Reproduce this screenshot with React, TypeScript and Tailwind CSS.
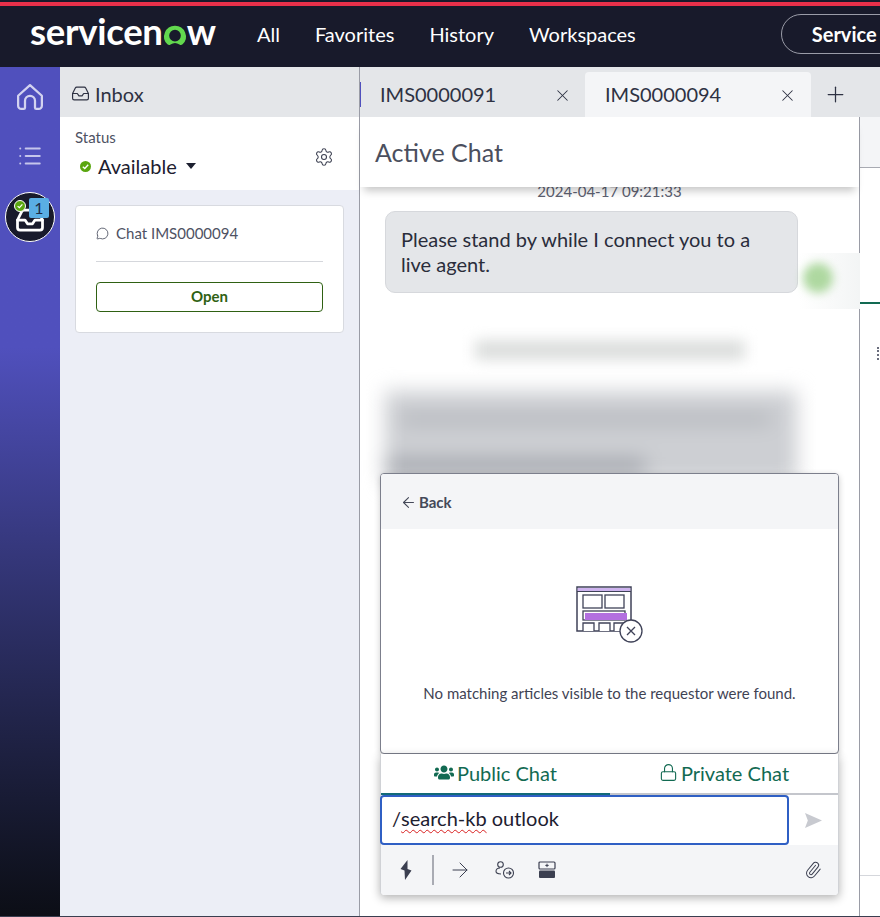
import { Inbox, List, Lock, MessageCircle, Paperclip, Plus, Settings, X, ArrowLeft, ArrowRight } from "lucide-react"
import { FaUsers } from "react-icons/fa"

const navItems = ["All", "Favorites", "History", "Workspaces"]

function LogoRing() {
  return (
    <svg viewBox="0 0 24 24" className="-mx-[1px] mt-[5px] h-[26px] w-[26px]">
      <path
        d="M12 2.500a10 10 0 0 0-7 17.200c.8.800 2 .900 2.900.200a7.200 7.200 0 0 1 8.200 0c.9.700 2.100.600 2.900-.200A10 10 0 0 0 12 2.500zm0 14.500a5.400 5.400 0 1 1 0-10.800 5.400 5.400 0 0 1 0 10.800z"
        fill="#62d84e"
      />
    </svg>
  )
}

function HomeIcon() {
  return (
    <svg viewBox="0 0 24 24" className="h-[30px] w-[30px]" fill="none" stroke="#d3d3f0" strokeWidth="1.800" strokeLinejoin="round">
      <path d="M2.500 11 12 2.500 21.500 11v8a2.500 2.500 0 0 1-2.500 2.500h-2a1 1 0 0 1-1-1V15a4 4 0 0 0-8 0v5.500a1 1 0 0 1-1 1H5A2.500 2.500 0 0 1 2.500 19z" />
    </svg>
  )
}

function EmptyIllustration() {
  return (
    <svg viewBox="0 0 68 60" className="h-[60px] w-[68px]">
      <rect x="1" y="1" width="54" height="44" fill="#fff" stroke="#3f4258" strokeWidth="1.500" />
      <rect x="1.700" y="2" width="52.600" height="3" fill="#cdb3ee" />
      <line x1="1" y1="5.500" x2="55" y2="5.500" stroke="#3f4258" strokeWidth="1" />
      <rect x="7" y="9" width="19" height="13" fill="#fff" stroke="#3f4258" strokeWidth="1.300" />
      <rect x="29" y="9" width="19" height="13" fill="#fff" stroke="#3f4258" strokeWidth="1.300" />
      <rect x="7" y="25" width="42" height="9" fill="#fff" stroke="#3f4258" strokeWidth="1.300" />
      <rect x="9" y="27" width="42" height="7" fill="#b36fe0" />
      <path d="M7 45v-8h11v8M23 45v-8h11v8M38 45v-8h11v8" fill="#fff" stroke="#3f4258" strokeWidth="1.300" />
      <circle cx="55" cy="45" r="11" fill="#fff" stroke="#3f4258" strokeWidth="1.300" />
      <path d="M51 41l8 8M59 41l-8 8" stroke="#3f4258" strokeWidth="1.300" />
    </svg>
  )
}

function BoltIcon() {
  return (
    <svg viewBox="0 0 14 20" className="h-[20px] w-[14px]">
      <path d="M8.500 0 1.500 9l4 1.500L6 20l6.500-9.500-4-1.500z" fill="#3b3f50" />
    </svg>
  )
}

function SendIcon() {
  return (
    <svg viewBox="0 0 20 18" className="h-[17px] w-[19px]">
      <path d="M1 1 19 9 1 17l3-8z" fill="#c8cad0" />
    </svg>
  )
}

function TransferIcon() {
  return (
    <svg viewBox="0 0 22 20" className="h-[20px] w-[22px]" fill="none" stroke="#3b3f50" strokeWidth="1.100">
      <circle cx="6.500" cy="4.500" r="2.800" />
      <path d="M6 8c-2.500 0-4 1.500-4 3.300S4 14 7 14" />
      <circle cx="14.500" cy="13" r="5" />
      <path d="M12 13h5M15 11l2 2-2 2" />
    </svg>
  )
}

function SplitIcon() {
  return (
    <svg viewBox="0 0 18 18" className="h-[18px] w-[18px]">
      <rect x="1" y="1" width="16" height="7" rx="1" fill="none" stroke="#3b3f50" strokeWidth="1.200" />
      <path d="M9 2.700v3.400M7.300 4.400h3.400" stroke="#3b3f50" strokeWidth="1" />
      <rect x="1" y="9.500" width="16" height="7.500" rx="1" fill="#3b3f50" />
    </svg>
  )
}

function InboxBadge() {
  return (
    <div className="relative flex h-[50px] w-[50px] items-center justify-center rounded-full border border-white bg-[#181a2b]">
      <Inbox className="mt-[6px] h-[30px] w-[30px] text-white" strokeWidth={2.200} />
      <span className="absolute right-[5px] top-[5px] flex h-[20px] w-[20px] items-center justify-center rounded-[2px] bg-[#5aaee4] text-[16px] text-[#1d2b45]">
        1
      </span>
      <span className="absolute left-[8px] top-[7px] flex h-[12px] w-[12px] items-center justify-center rounded-full border border-white bg-[#5aa60f]">
        <svg viewBox="0 0 10 10" className="h-[8px] w-[8px]">
          <path d="M2 5.200 4.200 7.200 8 3" fill="none" stroke="#fff" strokeWidth="1.500" />
        </svg>
      </span>
    </div>
  )
}

export default function App() {
  return (
    <div className="flex h-[917px] w-[880px] flex-col overflow-hidden bg-white font-['Lato',sans-serif] text-[#2e3243]">
      <header className="flex h-[67px] shrink-0 flex-col bg-[#181a2b]">
        <div className="mt-[2px] h-[4px] bg-[#e8304a]" />
        <div className="flex flex-1 items-center overflow-hidden pb-[6px] pl-[30px]">
          <div className="flex w-[227px] shrink-0 items-center text-[36.500px] font-bold leading-none tracking-[-0.3px] text-white">
            <span className="-mt-[5px]">servicen</span>
            <LogoRing />
            <span className="-mt-[5px]">w</span>
          </div>
          <nav className="flex gap-[35px] text-[20px] text-white">
            {navItems.map((item) => (
              <span key={item}>{item}</span>
            ))}
          </nav>
          <div className="ml-[145px] flex h-[40px] w-[200px] shrink-0 items-center rounded-[20px] border border-[#9a9ca8] pl-[30px] text-[20px] font-bold text-white">
            Service
          </div>
        </div>
      </header>

      <div className="flex min-h-0 flex-1">
        <aside className="flex w-[60px] shrink-0 flex-col items-center bg-gradient-to-b from-[#5050bd] from-[33%] to-[#0c0e16] to-100% pt-[15px]">
          <HomeIcon />
          <List className="mt-[31px] h-[26px] w-[26px] text-[#c6c6ec]" strokeWidth={1.800} />
          <div className="mt-[23px]">
            <InboxBadge />
          </div>
        </aside>

        <section className="flex w-[300px] shrink-0 flex-col border-r border-[#9a9ca6] bg-[#eceef6]">
          <div className="flex h-[50px] shrink-0 items-center gap-[5px] bg-[#e4e6e9] pl-[11px] pt-[3px] text-[20px]">
            <Inbox className="h-[19px] w-[19px]" strokeWidth={1.500} />
            <span>Inbox</span>
          </div>
          <div className="relative h-[73px] shrink-0 bg-white pl-[15px] pt-[10px]">
            <div className="text-[15px] leading-[20px] text-[#4e5263]">Status</div>
            <div className="mt-[5px] flex items-center pl-[5px] text-[20px] leading-[28px] text-[#1d2030]">
              <span className="mr-[7px] flex h-[11px] w-[11px] items-center justify-center rounded-full bg-[#5aa60f]">
                <svg viewBox="0 0 10 10" className="h-[9px] w-[9px]">
                  <path d="M2 5.200 4.200 7.200 8 3" fill="none" stroke="#fff" strokeWidth="1.500" />
                </svg>
              </span>
              Available
              <span className="ml-[9px] h-0 w-0 border-x-[5px] border-t-[6px] border-x-transparent border-t-[#1d2030]" />
            </div>
            <Settings className="absolute right-[25px] top-[30px] h-[20px] w-[20px] text-[#3d4152]" strokeWidth={1.300} />
          </div>
          <div className="mx-[15px] mt-[15px] h-[128px] rounded-[4px] border border-[#d8dae0] bg-white px-[20px]">
            <div className="flex h-[56px] items-center gap-[7px] border-b border-[#d5d7dc] text-[15px] text-[#4e5263]">
              <MessageCircle className="h-[13px] w-[13px]" strokeWidth={1.600} />
              Chat IMS0000094
            </div>
            <button className="mt-[20px] h-[30px] w-full rounded-[4px] border border-[#2f6113] pb-[1px] text-[15px] font-bold text-[#2f6113]">
              Open
            </button>
          </div>
        </section>

        <main className="flex min-w-0 flex-1 flex-col">
          <div className="flex h-[50px] shrink-0 items-end bg-[#e4e6e9] text-[20px] text-[#2e3243]">
            <div className="relative flex h-[45px] w-[225px] items-center justify-between pb-[1px] pl-[20px] pr-[13px]">
              <span className="absolute left-0 top-[10px] h-[25px] w-[1px] bg-[#5050bd]" />
              <span>IMS0000091</span>
              <X className="mt-[3px] h-[19px] w-[19px]" strokeWidth={1.300} />
            </div>
            <div className="flex h-[45px] w-[226px] items-center justify-between rounded-t-[4px] bg-[#f4f5f7] pb-[1px] pl-[20px] pr-[14px]">
              <span>IMS0000094</span>
              <X className="mt-[3px] h-[19px] w-[19px]" strokeWidth={1.300} />
            </div>
            <div className="flex h-[45px] w-[49px] items-center justify-center">
              <Plus className="h-[25px] w-[25px]" strokeWidth={1.200} />
            </div>
          </div>

          <div className="flex min-h-0 flex-1">
            <div className="relative z-[1] w-[499px] shrink-0">
              <div className="relative z-10 flex h-[70px] items-center bg-white pl-[15px] pt-[2px] text-[25px] text-[#4b4f5e] shadow-[0_8px_8px_-4px_rgba(0,0,0,0.22)]">
                Active Chat
              </div>
              <div className="-mt-[5px] text-center text-[15px] leading-[18px] text-[#5c6070]">2024-04-17 09:21:33</div>
              <div className="relative ml-[25px] mt-[11px] h-[82px] w-[413px] rounded-[10px] border border-[#d6d8dc] bg-[#e4e6e9] py-[15px] pl-[15px] pr-[40px] text-[20px] leading-[25px] text-[#2a2d3b]">
                Please stand by while I connect you to a live agent.
                <span className="absolute -right-[63px] top-[41px] h-[56px] w-[61px] bg-gradient-to-r from-white to-[#f3f5f5]">
                  <span className="absolute left-[4px] top-[10px] block h-[30px] w-[30px] rounded-full bg-[#aed8a0] blur-[5px]" />
                </span>
              </div>
              <div className="mx-auto mt-[47px] h-[20px] w-[270px] bg-[#dcdedd] blur-[7px]" />
              <div className="ml-[25px] mt-[31px] h-[92px] w-[412px] overflow-hidden bg-[#cdcfd3] blur-[10px]">
                <div className="ml-[16px] mt-[24px] h-[8px] w-[370px] bg-[#a9acb2]" />
                <div className="ml-[0px] mt-[36px] h-[16px] w-[260px] bg-[#a2a5ac]" />
              </div>

              <div className="absolute bottom-[21px] left-[20px] w-[459px]">
                <div className="flex h-[281px] flex-col overflow-hidden rounded-[4px] border border-[#7c7f8c] bg-white shadow-[0_2px_6px_rgba(0,0,0,0.2)]">
                  <div className="flex h-[55px] shrink-0 items-center gap-[2px] bg-[#f4f5f7] pl-[19px] pt-[2px] text-[15px] font-bold text-[#454959]">
                    <ArrowLeft className="h-[17px] w-[17px]" strokeWidth={1.500} />
                    Back
                  </div>
                  <div className="flex flex-1 flex-col items-center pt-[57px]">
                    <EmptyIllustration />
                    <p className="mt-[37px] text-[15px] leading-[20px] text-[#3f4354]">
                      No matching articles visible to the requestor were found.
                    </p>
                  </div>
                </div>

                <div className="flex flex-col rounded-b-[4px] border-x border-[#d0d2d6] bg-white shadow-[0_3px_10px_rgba(0,0,0,0.3)]">
                  <div className="flex h-[41px] text-[20px] text-[#126a52]">
                    <div className="flex w-[229px] items-center justify-center gap-[3px] border-b-[2px] border-[#126a78] pb-[2px]">
                      <FaUsers className="h-[19px] w-[20px]" />
                      Public Chat
                    </div>
                    <div className="flex flex-1 items-center justify-center gap-[3px] border-b-[2px] border-[#c4c6cc] pb-[2px]">
                      <Lock className="h-[19px] w-[19px]" strokeWidth={1.400} />
                      Private Chat
                    </div>
                  </div>
                  <div className="flex h-[50px] items-center">
                    <div className="-ml-[1px] flex h-full w-[409px] items-center rounded-[4px] border-2 border-[#2f5fc4] pb-[4px] pl-[10px] text-[20px] text-[#1d2030]">
                      /
                      <span className="underline decoration-[#d92020] decoration-wavy decoration-1 underline-offset-[3px]">search-kb</span>
                      &nbsp;outlook
                    </div>
                    <span className="ml-[15px]">
                      <SendIcon />
                    </span>
                  </div>
                  <div className="flex h-[50px] items-center rounded-b-[4px] bg-[#f4f5f7] pl-[18px] pr-[16px] text-[#3b3f50]">
                    <BoltIcon />
                    <span className="ml-[19px] h-[30px] w-[1.500px] bg-[#a9abb3]" />
                    <ArrowRight className="ml-[14px] h-[24px] w-[24px]" strokeWidth={1} />
                    <span className="ml-[22px]">
                      <TransferIcon />
                    </span>
                    <span className="ml-[22px]">
                      <SplitIcon />
                    </span>
                    <Paperclip className="ml-auto h-[18px] w-[18px] rotate-[-5deg]" strokeWidth={1.300} />
                  </div>
                </div>
              </div>
            </div>

            <aside className="flex flex-1 flex-col border-l border-[#9a9ca6]">
              <div className="h-[51px] border-b border-[#a8aab2] bg-[#f4f5f7]" />
              <div className="mt-[134px] h-[2px] bg-[#126a52]" />
              <div className="mt-[43px] flex justify-end pr-[1px]">
                <span className="h-[13px] w-[1px] border-l-2 border-dotted border-[#6a6d7c]" />
              </div>
              <div className="mb-[40px] mt-auto h-[1px] bg-[#d5d7dc]" />
            </aside>
          </div>
        </main>
      </div>
      <div className="h-[1px] shrink-0 bg-[#3a3e50]" />
    </div>
  )
}
